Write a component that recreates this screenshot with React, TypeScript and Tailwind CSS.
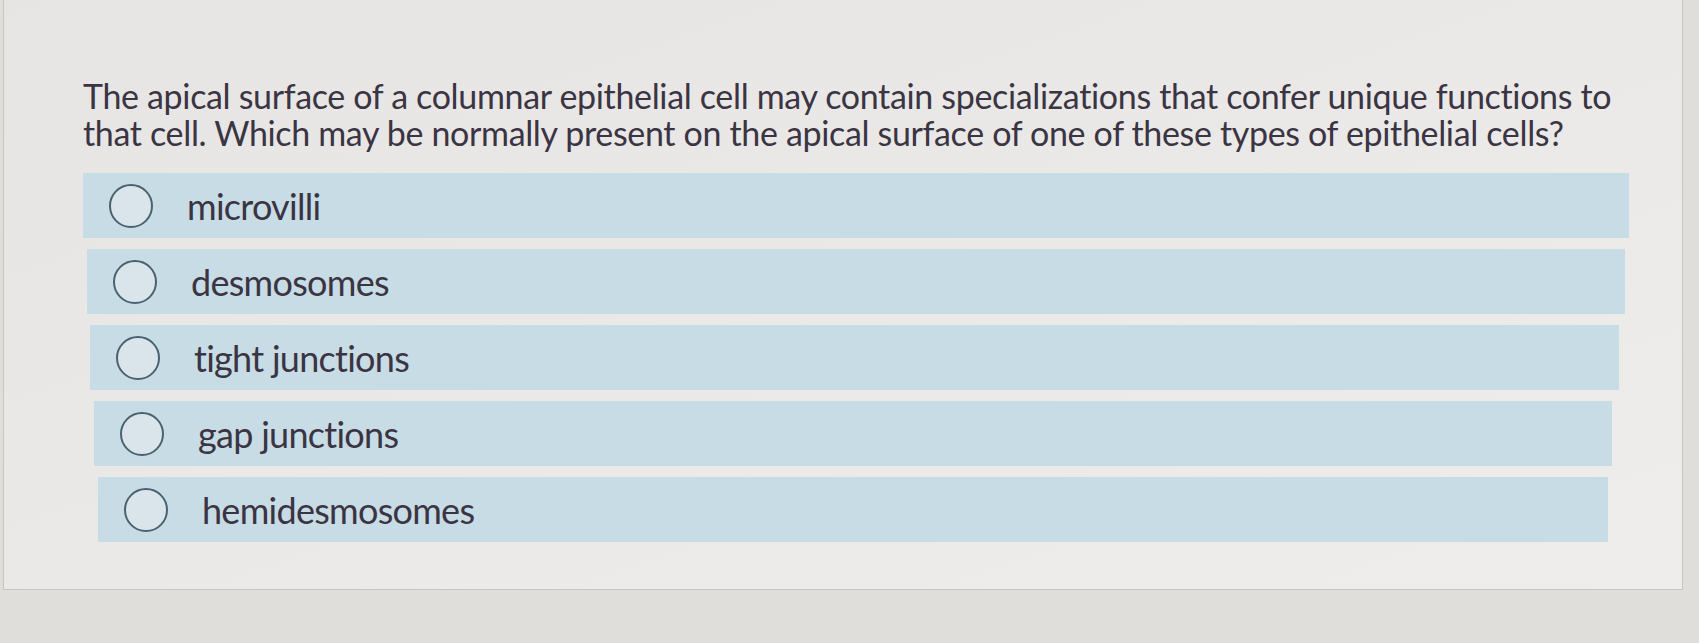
const OPTIONS = [
  { label: "microvilli", cls: "ml-0 w-[1546px]" },
  { label: "desmosomes", cls: "ml-[4px] w-[1538px]" },
  { label: "tight junctions", cls: "ml-[7px] w-[1529px]" },
  { label: "gap junctions", cls: "ml-[11px] w-[1518px]" },
  { label: "hemidesmosomes", cls: "ml-[15px] w-[1510px]" },
];

export default function App() {
  return (
    <div className="h-[643px] w-full overflow-hidden bg-[#e0dedb] font-['Lato','Noto_Sans',sans-serif] text-[#3a3443]">
      {/* question card */}
      <div className="ml-[3px] h-[590px] w-[1680px] border-x border-b border-[#c7c6c3] bg-linear-to-br from-[#e6e5e3] to-[#eeedeb] pl-[79px] pt-[77px]">
        <p className="text-[34px] leading-[37px] tracking-[-0.01em]">
          The apical surface of a columnar epithelial cell may contain specializations that confer unique functions to
          <br />
          that cell. Which may be normally present on the apical surface of one of these types of epithelial cells?
        </p>

        <div className="mt-[22px] flex flex-col gap-[11px]">
          {OPTIONS.map(({ label, cls }) => (
            <div key={label} className={`flex h-[65px] items-center bg-[#c8dce5] pl-[26px] ${cls}`}>
              <span className="h-[44px] w-[44px] shrink-0 rounded-full border-[2.5px] border-[#4a6270] bg-[#d9e5ea]" />
              <span className="ml-[34px] text-[36px] leading-[40px] tracking-[-0.02em]">{label}</span>
            </div>
          ))}
        </div>
      </div>
    </div>
  );
}
